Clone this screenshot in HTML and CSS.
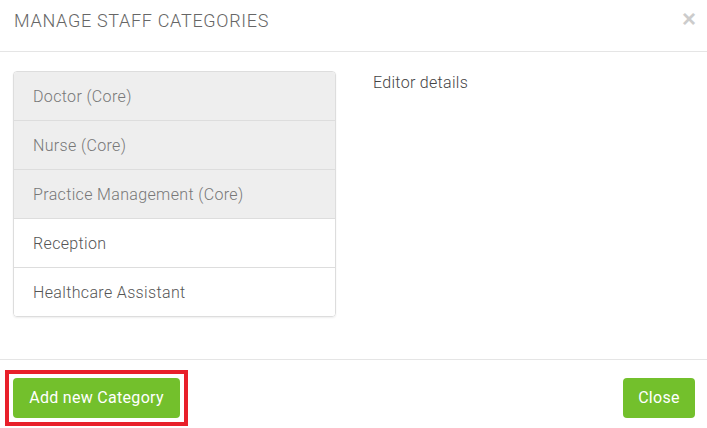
FILE: index.html
```html
<!DOCTYPE html>
<html>
<head>
<meta charset="utf-8">
<link rel="stylesheet" href="styles.css">
</head>
<body>
<div class="modal">
  <div class="modal-header">
    <h4 class="modal-title">MANAGE STAFF CATEGORIES</h4>
    <button class="close" type="button">&times;</button>
  </div>
  <div class="modal-body">
    <ul class="list">
      <li class="item core">Doctor (Core)</li>
      <li class="item core">Nurse (Core)</li>
      <li class="item core">Practice Management (Core)</li>
      <li class="item">Reception</li>
      <li class="item">Healthcare Assistant</li>
    </ul>
    <div class="editor">Editor details</div>
  </div>
  <div class="modal-footer">
    <div class="highlight">
      <button class="btn" type="button">Add new Category</button>
    </div>
    <button class="btn btn-close" type="button">Close</button>
  </div>
</div>
</body>
</html>
```
FILE: styles.css
```css
html, body {
  margin: 0;
  padding: 0;
  background: #fff;
}
body {
  font-family: Roboto, "Liberation Sans", sans-serif;
  color: #555;
  width: 707px;
  height: 428px;
  overflow: hidden;
}
.modal {
  display: flex;
  flex-direction: column;
}
.modal-header {
  display: flex;
  align-items: center;
  justify-content: space-between;
  height: 51px;
  padding: 0 11px 0 14px;
  border-bottom: 1px solid #e5e5e5;
}
.modal-title {
  margin: 0;
  font-size: 18px;
  font-weight: 300;
  color: #666;
  letter-spacing: 0.7px;
  line-height: 1;
  padding-bottom: 10px;
}
.close {
  border: 0;
  background: none;
  padding: 0;
  font-family: "Liberation Sans", Arial, sans-serif;
  font-size: 24px;
  font-weight: bold;
  line-height: 1;
  color: #ccc;
  margin-bottom: 14px;
}
.modal-body {
  display: grid;
  grid-template-columns: 323px 1fr;
  column-gap: 37px;
  align-items: start;
  padding: 19px 13px 42px 13px;
  border-bottom: 1px solid #e5e5e5;
}
.list {
  list-style: none;
  margin: 0;
  padding: 0;
  border: 1px solid #ddd;
  border-radius: 4px;
  box-shadow: 0 1px 2px rgba(0,0,0,0.07);
  overflow: hidden;
}
.item {
  padding: 13px 19px 11px;
  font-size: 16px;
  line-height: 24px;
  font-weight: 300;
  letter-spacing: 0.35px;
  color: #555;
  background: #fff;
  border-top: 1px solid #ddd;
}
.item:first-child {
  border-top: 0;
}
.item.core {
  background: #eee;
  color: #777;
}
.editor {
  font-size: 16px;
  line-height: 24px;
  color: #444;
  font-weight: 300;
  letter-spacing: 0.3px;
}
.modal-footer {
  display: flex;
  justify-content: space-between;
  align-items: center;
  padding: 18px 12px 0 13px;
}
.highlight {
  display: flex;
  outline: 4px solid #e8202a;
  outline-offset: 4px;
}
.btn {
  border: 0;
  border-radius: 4px;
  background: #73c02c;
  color: #fff;
  font-family: Roboto, "Liberation Sans", sans-serif;
  font-size: 16px;
  font-weight: 400;
  letter-spacing: 0.3px;
  height: 40px;
  padding: 0 16px;
  line-height: 40px;
}
.highlight .btn {
  width: 167px;
}
.btn-close {
  width: 72px;
  padding: 0;
}
```
